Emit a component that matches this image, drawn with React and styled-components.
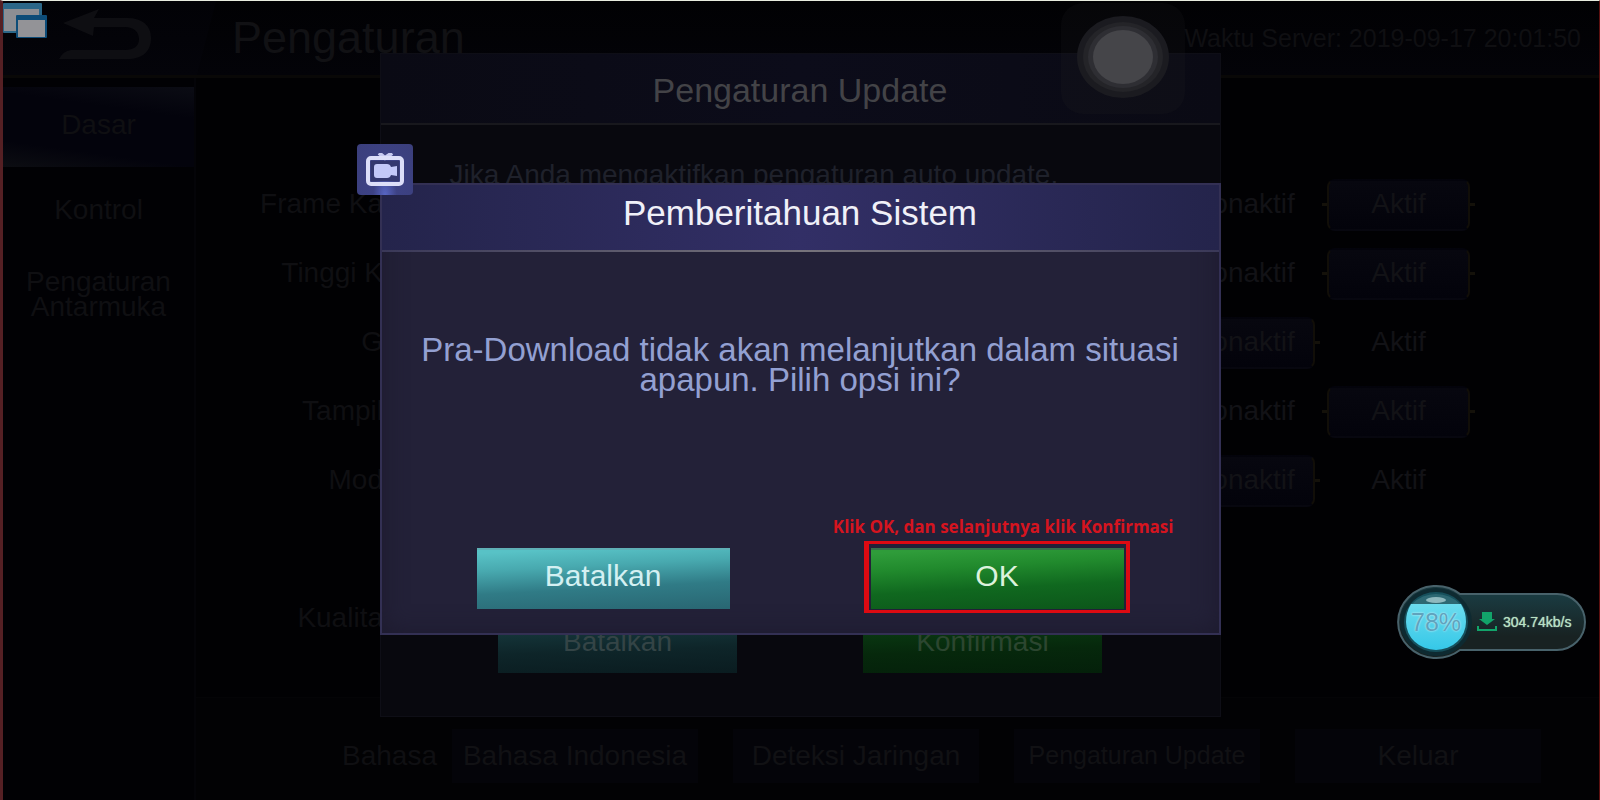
import { useState } from "react";
import { createGlobalStyle, styled } from "styled-components";

const tabs = ["Dasar", "Kontrol", "Pengaturan Antarmuka"];
const settings = [
  { id: "frame", label: "Frame Ka", on: true },
  { id: "tinggi", label: "Tinggi K", on: true },
  { id: "g", label: "G", on: false },
  { id: "tampil", label: "Tampil", on: true },
  { id: "mod", label: "Mod", on: false },
  { id: "empty" },
  { id: "kualitas", label: "Kualita" },
];

function BackArrow() {
  return (
    <svg width="92" height="52" viewBox="0 0 92 52" aria-hidden="true">
      <path
        d="M4 14 L40 0 L35 9 H68 C84 9 92 17 92 29 C92 42 84 50 68 50 H0 Q4 42 12 41 H66 C75 41 80 37 80 30 C80 23 75 18 66 18 H35 L34 27 Z"
        fill="#0e0e12"
      />
    </svg>
  );
}

function WindowsIcon() {
  return (
    <svg width="45" height="37" viewBox="0 0 45 37" aria-hidden="true">
      <rect width="39" height="30" rx="1" fill="#2c6788" />
      <rect x="1" y="6" width="35" height="22" fill="#8d8e93" />
      <rect x="13" y="12" width="31" height="23" rx="1" fill="#0d4c78" />
      <rect x="15" y="17" width="27" height="17" fill="#939397" />
    </svg>
  );
}

function TvIcon() {
  return (
    <svg width="38" height="34" viewBox="0 0 38 34" aria-hidden="true">
      <path d="M13 0 L19 5 L26 0" fill="none" stroke="#c7caf0" strokeWidth="4" />
      <rect x="2" y="5" width="34" height="26" rx="3" fill="none" stroke="#dcdef8" strokeWidth="4" />
      <rect x="5" y="8" width="28" height="20" fill="#34386f" />
      <path d="M8 14 Q8 11 11 11 H21 Q24 11 25 14 L31 13 V23 L25 22 Q24 25 21 25 H11 Q8 25 8 22 Z" fill="#c3c8f8" />
    </svg>
  );
}

function DownloadIcon() {
  return (
    <svg width="20" height="20" viewBox="0 0 20 20" aria-hidden="true">
      <path d="M5 0 H15 V7 H18 L10 13 L2 7 H5 Z" fill="#12a46a" />
      <path d="M1 14 V18 H19 V14" fill="none" stroke="#12a46a" strokeWidth="2" />
    </svg>
  );
}

function SpeedShape() {
  return (
    <SpeedDrawing viewBox="0 0 196 80" aria-hidden="true">
      <defs>
        <linearGradient id="pill" x1="0" y1="0" x2="0" y2="1">
          <stop offset="0.15" stopColor="#1a3a40" />
          <stop offset="0.7" stopColor="#182222" />
        </linearGradient>
        <linearGradient id="water" x1="0" y1="0" x2="0" y2="1">
          <stop offset="0" stopColor="#6cdcee" />
          <stop offset="1" stopColor="#35c8e8" />
        </linearGradient>
      </defs>
      <path
        d="M67 12 H164 A28 28 0 0 1 164 68 H67 A38 36 0 1 1 67 12 Z"
        fill="url(#pill)"
        stroke="#48626b"
        strokeWidth="2"
      />
      <ellipse cx="43" cy="40" rx="36" ry="34" fill="#0e2a31" />
      <ellipse cx="43" cy="40" rx="32" ry="30" fill="#16505c" />
      <path d="M19 22 Q29 12 43 12 Q57 12 67 22 Z" fill="#2d6873" />
      <ellipse cx="43" cy="18" rx="10" ry="3" fill="#8fb8be" />
      <path d="M18 22 H68 Q73 30 73 40 A30 28 0 0 1 13 40 Q13 30 18 22 Z" fill="url(#water)" />
    </SpeedDrawing>
  );
}

function App() {
  const [tab, setTab] = useState("Dasar");

  return (
    <>
      <GlobalStyle />
      <Screen>
        <Header>
          <BackButton aria-label="Kembali">
            <BackArrow />
          </BackButton>
          <PageTitle>Pengaturan</PageTitle>
          <ServerTime>Waktu Server: 2019-09-17 20:01:50</ServerTime>
        </Header>
        <Body>
          <Sidebar>
            {tabs.map((name) => (
              <Tab key={name} $active={name === tab} onClick={() => setTab(name)}>
                {name}
              </Tab>
            ))}
          </Sidebar>
          <Main>
            <Settings>
              {settings.map((row) => (
                <SettingRow key={row.id}>
                  <SettingLabel>{row.label}</SettingLabel>
                  {row.on !== undefined && (
                    <Choices>
                      <Choice $selected={!row.on}>Nonaktif</Choice>
                      <Choice $selected={row.on}>Aktif</Choice>
                    </Choices>
                  )}
                </SettingRow>
              ))}
            </Settings>
            <Footer>
              <FooterLabel>Bahasa</FooterLabel>
              <FooterButton>Bahasa Indonesia</FooterButton>
              <FooterButton>Deteksi Jaringan</FooterButton>
              <FooterButton $small>Pengaturan Update</FooterButton>
              <FooterButton>Keluar</FooterButton>
            </Footer>
          </Main>
        </Body>
      </Screen>

      <Overlay $top="53px">
        <UpdateDialog>
          <UpdateTitle>Pengaturan Update</UpdateTitle>
          <UpdateText>Jika Anda mengaktifkan pengaturan auto update.</UpdateText>
          <UpdateActions>
            <DimButton>Batalkan</DimButton>
            <DimButton $green>Konfirmasi</DimButton>
          </UpdateActions>
        </UpdateDialog>
      </Overlay>

      <Overlay $top="183px">
        <Dialog role="dialog" aria-labelledby="dialog-title">
          <RecordButton aria-label="Rekam">
            <TvIcon />
          </RecordButton>
          <DialogTitle id="dialog-title">Pemberitahuan Sistem</DialogTitle>
          <Message>Pra-Download tidak akan melanjutkan dalam situasi apapun. Pilih opsi ini?</Message>
          <Hint>Klik OK, dan selanjutnya klik Konfirmasi</Hint>
          <Actions>
            <ActionButton>Batalkan</ActionButton>
            <Highlight>
              <ActionButton $green>OK</ActionButton>
            </Highlight>
          </Actions>
        </Dialog>
      </Overlay>

      <WindowsBadge>
        <WindowsIcon />
      </WindowsBadge>
      <AssistiveTouch aria-label="Menu">
        <svg width="92" height="82" viewBox="0 0 92 82" aria-hidden="true">
          <ellipse cx="46" cy="41" rx="46" ry="41" fill="#1b1b20" />
          <ellipse cx="46" cy="41" rx="40" ry="35" fill="#242428" />
          <ellipse cx="46" cy="41" rx="35" ry="31" fill="#2e2e33" />
          <ellipse cx="46" cy="41" rx="30" ry="27" fill="#454549" />
        </svg>
      </AssistiveTouch>
      <SpeedWidget>
        <SpeedShape />
        <Percent>78%</Percent>
        <DownloadIcon />
        <Speed>304.74kb/s</Speed>
      </SpeedWidget>
    </>
  );
}

const GlobalStyle = createGlobalStyle`
  * {
    box-sizing: border-box;
  }
  body {
    margin: 0;
    background: #010103;
    font-family: "Liberation Sans", Arial, sans-serif;
  }
  button {
    font-family: inherit;
    border: none;
    padding: 0;
    cursor: pointer;
  }
`;
const Screen = styled.div`
  display: flex;
  flex-direction: column;
  min-height: 100vh;
  border-top: 1px solid #e8ecdf;
  border-left: 3px solid #552024;
  border-right: 1px solid #5c1010;
  color: #0f0f12;
`;
const Header = styled.header`
  display: flex;
  align-items: center;
  height: 77px;
  background: linear-gradient(180deg, #010103, #030308);
  border-bottom: 3px solid #090807;
`;
const BackButton = styled.button`
  width: 213px;
  height: 100%;
  padding: 0 10px 4px 0;
  background: linear-gradient(180deg, #020206, #04040a);
  clip-path: polygon(0 0, 100% 0, 91% 100%, 0 100%);
`;
const PageTitle = styled.h1`
  margin: 0 0 0 16px;
  font-size: 45px;
  font-weight: 400;
  color: #111114;
`;
const ServerTime = styled.span`
  margin-left: auto;
  padding-right: 18px;
  font-size: 25px;
`;
const Body = styled.div`
  display: flex;
  flex: 1;
`;
const Sidebar = styled.nav`
  display: flex;
  flex-direction: column;
  gap: 5px;
  width: 193px;
  padding-top: 9px;
  background: #010104;
  border-right: 2px solid #040408;
`;
const Tab = styled.button`
  height: 80px;
  padding: 0 10px 6px;
  font-size: 28px;
  line-height: 25px;
  color: #0f0f12;
  background: ${(props) =>
    props.$active
      ? "linear-gradient(188deg, #0b0c14 0%, #03030c 30%, #03030c 75%, #0c0d12 100%)"
      : "transparent"};
`;
const Main = styled.main`
  display: flex;
  flex: 1;
  flex-direction: column;
  justify-content: space-between;
`;
const Settings = styled.div`
  display: flex;
  flex-direction: column;
  gap: 17px;
  padding: 101px 129px 0 0;
`;
const SettingRow = styled.div`
  display: flex;
  justify-content: space-between;
  align-items: center;
  height: 52px;
`;
const SettingLabel = styled.span`
  width: 187px;
  padding-bottom: 2px;
  font-size: 28px;
  text-align: right;
`;
const Choices = styled.div`
  display: flex;
  gap: 12px;
`;
const Choice = styled.button`
  position: relative;
  width: 143px;
  height: 52px;
  padding-bottom: 2px;
  font-size: 28px;
  color: #121216;
  border-radius: 8px;
  border: 2px solid transparent;
  border-left-color: ${(props) => (props.$selected ? "#110e08" : "transparent")};
  border-right-color: ${(props) => (props.$selected ? "#110e08" : "transparent")};
  background: ${(props) =>
    props.$selected ? "linear-gradient(180deg, #07070f, #03030b)" : "transparent"};
  &::before,
  &::after {
    content: "";
    position: absolute;
    top: 22px;
    width: 5px;
    height: 3px;
    background: ${(props) => (props.$selected ? "#14110a" : "transparent")};
  }
  &::before {
    left: -7px;
  }
  &::after {
    right: -7px;
  }
`;
const Footer = styled.footer`
  display: flex;
  justify-content: flex-end;
  align-items: center;
  gap: 35px;
  height: 103px;
  padding: 13px 58px 0 0;
  background: #020204;
  border-top: 1px solid #040406;
`;
const FooterLabel = styled.span`
  margin-right: -20px;
  font-size: 28px;
`;
const FooterButton = styled.button`
  width: 246px;
  height: 54px;
  font-size: ${(props) => (props.$small ? "25px" : "28px")};
  color: #111114;
  background: #040409;
`;
const Overlay = styled.div`
  position: absolute;
  top: ${(props) => props.$top};
  left: 0;
  right: 0;
  display: flex;
  justify-content: center;
`;
const UpdateDialog = styled.section`
  display: flex;
  flex-direction: column;
  width: 90%;
  max-width: 841px;
  min-height: 664px;
  padding-bottom: 43px;
  background: #08080e;
  border: 1px solid #0e0e16;
`;
const UpdateTitle = styled.h2`
  margin: 0;
  height: 71px;
  font-size: 34px;
  font-weight: 400;
  line-height: 73px;
  text-align: center;
  color: #434347;
  background: linear-gradient(90deg, #0a0a14, #0c0c1a 50%, #0a0a14);
  border-bottom: 2px solid #18181d;
`;
const UpdateText = styled.p`
  margin: 34px 0 0 69px;
  font-size: 28px;
  line-height: 32px;
  color: #1f212b;
`;
const UpdateActions = styled.div`
  display: flex;
  justify-content: center;
  gap: 126px;
  margin-top: auto;
`;
const DimButton = styled.button`
  width: 239px;
  height: 58px;
  padding-bottom: 4px;
  font-size: 28px;
  color: ${(props) => (props.$green ? "#2c4630" : "#344446")};
  background: ${(props) =>
    props.$green
      ? "linear-gradient(178deg, #0c4416, #06280c 60%, #04200a)"
      : "linear-gradient(178deg, #1a4247, #0e2529 60%, #0a1c20)"};
`;
const Dialog = styled.section`
  position: relative;
  display: flex;
  flex-direction: column;
  width: 90%;
  max-width: 841px;
  background: #232138;
  border: 2px solid #333054;
  box-shadow: inset 0 0 24px #1d1a2e;
`;
const DialogTitle = styled.h2`
  margin: 0;
  height: 67px;
  font-size: 35px;
  font-weight: 400;
  line-height: 56px;
  text-align: center;
  color: #f0f0f8;
  background: linear-gradient(90deg, #24244b, #322f66 50%, #24244b);
  border-bottom: 2px solid;
  border-image: linear-gradient(90deg, #3a3858, #77747c 50%, #3a3858) 1;
`;
const Message = styled.p`
  margin: 83px 20px 0;
  font-size: 33px;
  line-height: 30px;
  text-align: center;
  color: #93a0d2;
`;
const Hint = styled.p`
  margin: 120px 45px 0 auto;
  font-family: "Open Sans", sans-serif;
  font-size: 17px;
  font-weight: 700;
  line-height: 24px;
  color: #d5141f;
`;
const Actions = styled.div`
  display: flex;
  justify-content: space-between;
  align-items: flex-start;
  padding: 9px 89px 24px 95px;
`;
const ActionButton = styled.button`
  display: block;
  width: 253px;
  height: 61px;
  padding-bottom: 7px;
  font-size: 30px;
  color: ${(props) => (props.$green ? "#dcf2dd" : "#d4f0f2")};
  border-top: 2px solid ${(props) => (props.$green ? "#36704a" : "#5fb0b6")};
  background: ${(props) =>
    props.$green
      ? "linear-gradient(177deg, #2f9c3a 5%, #218a2d 30%, #10681f 62%, #0c561a)"
      : "linear-gradient(177deg, #58c2c6 5%, #48a9af 30%, #307b86 62%, #296672)"};
`;
const Highlight = styled.div`
  margin: -7px 0 -4px;
  padding: 4px 2px 1px;
  border: solid #dd0a12;
  border-width: 3px 4px 3px 5px;
`;
const RecordButton = styled.button`
  position: absolute;
  top: -41px;
  left: -25px;
  display: grid;
  place-items: center;
  width: 56px;
  height: 51px;
  border-radius: 4px;
  background: radial-gradient(ellipse at 50% 100%, #5866c4, #3d4285 30%, #3b3f7c);
`;
const WindowsBadge = styled.div`
  position: absolute;
  top: 3px;
  left: 3px;
`;
const AssistiveTouch = styled.button`
  position: absolute;
  top: 3px;
  right: 415px;
  display: grid;
  place-items: center;
  width: 124px;
  height: 111px;
  padding-bottom: 4px;
  border-radius: 22px;
  background: rgba(40, 40, 40, 0.15);
`;
const SpeedWidget = styled.div`
  position: absolute;
  top: 582px;
  right: 11px;
  display: flex;
  align-items: center;
  width: 196px;
  height: 80px;
  padding-left: 18px;
`;
const SpeedDrawing = styled.svg`
  position: absolute;
  inset: 0;
  z-index: -1;
`;
const Percent = styled.span`
  width: 66px;
  font-size: 25px;
  color: #5fa3bd;
  text-shadow: 0 0 2px #e0f4fa;
`;
const Speed = styled.span`
  margin-left: 6px;
  font-size: 14px;
  color: #b8e0c4;
  text-shadow: 0 0 1px #b8e0c4;
`;
export default App;
